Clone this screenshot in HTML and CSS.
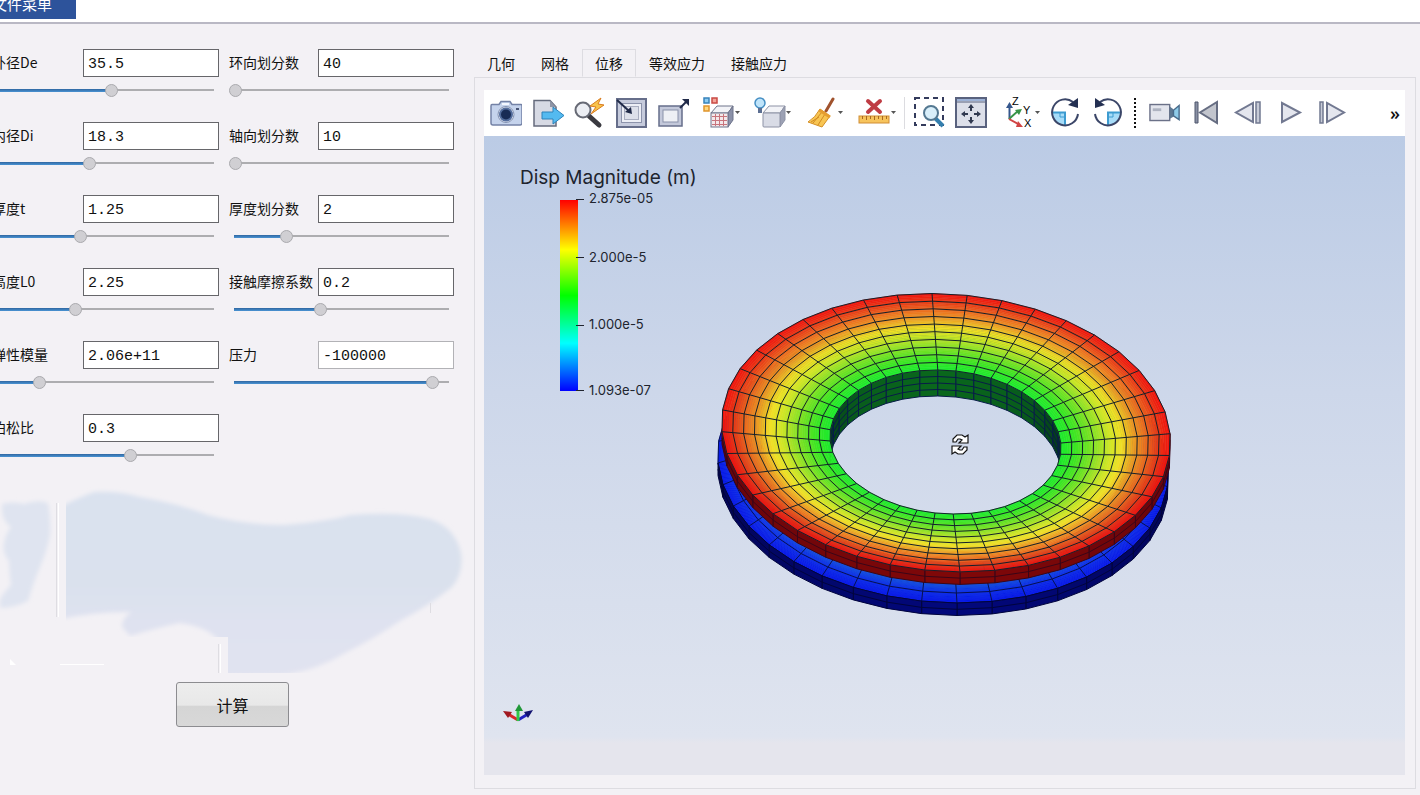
FILE: index.html
```
<!DOCTYPE html>
<html lang="zh">
<head>
    <meta charset="UTF-8">
    <meta name="viewport" content="width=device-width, initial-scale=1.0">
    <title>碟簧计算</title>
    <link rel="stylesheet" href="styles.css">
</head>
<body>
    <header class="menubar">
        <button class="menu-btn">文件菜单</button>
    </header>

    <main class="main">
        <section class="params">
            <form class="fields">
                <div class="field">
                    <label for="de">外径De</label>
                    <input type="text" id="de" value="35.5">
                    <input type="range" aria-label="外径De" max="1000" value="528" style="--v: 0.528">
                </div>
                <div class="field">
                    <label for="nc">环向划分数</label>
                    <input type="text" id="nc" value="40">
                    <input type="range" aria-label="环向划分数" max="1000" value="0" style="--v: 0">
                </div>
                <div class="field">
                    <label for="di">内径Di</label>
                    <input type="text" id="di" value="18.3">
                    <input type="range" aria-label="内径Di" max="1000" value="423" style="--v: 0.423">
                </div>
                <div class="field">
                    <label for="na">轴向划分数</label>
                    <input type="text" id="na" value="10">
                    <input type="range" aria-label="轴向划分数" max="1000" value="0" style="--v: 0">
                </div>
                <div class="field">
                    <label for="t">厚度t</label>
                    <input type="text" id="t" value="1.25">
                    <input type="range" aria-label="厚度t" max="1000" value="381" style="--v: 0.381">
                </div>
                <div class="field">
                    <label for="nt">厚度划分数</label>
                    <input type="text" id="nt" value="2">
                    <input type="range" aria-label="厚度划分数" max="1000" value="242" style="--v: 0.242">
                </div>
                <div class="field">
                    <label for="l0">高度L0</label>
                    <input type="text" id="l0" value="2.25">
                    <input type="range" aria-label="高度L0" max="1000" value="360" style="--v: 0.36">
                </div>
                <div class="field">
                    <label for="mu">接触摩擦系数</label>
                    <input type="text" id="mu" value="0.2">
                    <input type="range" aria-label="接触摩擦系数" max="1000" value="401" style="--v: 0.401">
                </div>
                <div class="field">
                    <label for="e">弹性模量</label>
                    <input type="text" id="e" value="2.06e+11">
                    <input type="range" aria-label="弹性模量" max="1000" value="192" style="--v: 0.192">
                </div>
                <div class="field">
                    <label for="p">压力</label>
                    <input type="text" id="p" class="pale" value="-100000">
                    <input type="range" aria-label="压力" max="1000" value="928" style="--v: 0.928">
                </div>
                <div class="field">
                    <label for="nu">泊松比</label>
                    <input type="text" id="nu" value="0.3">
                    <input type="range" aria-label="泊松比" max="1000" value="617" style="--v: 0.617">
                </div>
            </form>

            <svg class="smudge" viewBox="0 0 474 188" aria-hidden="true">
                <defs>
                    <filter id="soft"><feGaussianBlur stdDeviation="2"/></filter>
                    <linearGradient id="wash" x1="0" y1="0" x2="0" y2="1">
                        <stop offset="0" stop-color="#dae2ef"/>
                        <stop offset="0.5" stop-color="#dae1ed"/>
                        <stop offset="0.7" stop-color="#dfe2f0"/>
                        <stop offset="1" stop-color="#e1e3f0"/>
                    </linearGradient>
                    <clipPath id="cut"><path d="M0 0H57V188H0ZM66 0H474V186H228V150H66Z"/></clipPath>
                </defs>
                <g clip-path="url(#cut)">
                    <g filter="url(#soft)">
                        <path fill="#dfe4f0" d="M2 17Q12 14 24 17Q38 12 48 16Q51 32 50 48Q47 64 40 80Q34 94 28 114Q14 121 0 121V112Q4 105 11 98Q9 86 9 74Q2 66 4 56Q6 46 11 40Q1 34 2 17Z"/>
                        <path fill="url(#wash)" d="M60 20Q80 10 94 5Q120 4 140 10Q180 17 208 28Q245 38 284 38Q330 34 350 28Q400 24 430 32Q455 40 461 66Q464 86 452 100Q430 118 400 134Q370 154 345 166Q320 182 285 188L220 190V156Q210 140 180 136Q160 140 130 149L122 140Q122 130 132 125Q100 124 60 132Z"/>
                    </g>
                </g>
                <path stroke="#dedde2" fill="none" d="M56.500 16V130M218.500 157V186M430.500 116V126"/>
                <path stroke="#ffffff" fill="none" d="M58.500 16V130M220.500 157V186M60 177.500H104"/>
                <path fill="#ffffff" d="M10 172L16 178H10Z"/>
            </svg>

            <button class="calc-btn">计算</button>
        </section>

        <section class="results">
            <nav class="tabs">
                <button class="tab">几何</button>
                <button class="tab">网格</button>
                <button class="tab active">位移</button>
                <button class="tab">等效应力</button>
                <button class="tab">接触应力</button>
            </nav>

            <div class="panel">
                <div class="toolbar">
                    <div class="group">
                        <button class="tool" aria-label="截图"><svg viewBox="0 0 32 32" width="32" height="32">
                            <path d="M2 7.500H9L11 4.500H20L22 7.500H31Q32 7.500 32 9V26Q32 28 30 28H3Q1 28 1 26V9Q1 7.500 2 7.500Z" fill="#c5d3ec" stroke="#7482a6" stroke-width="1.500"/>
                            <circle cx="16" cy="17.500" r="8" fill="#e8edf7" stroke="#8391b0"/>
                            <circle cx="16" cy="17.500" r="6" fill="#182b55" stroke="#536c9c" stroke-width="2"/>
                            <path d="M12 7H19" stroke="#f4f7ff" stroke-width="2"/><rect x="26" y="11" width="3" height="2" fill="#485576"/>
                        </svg></button>
                        <button class="tool" aria-label="导出"><svg viewBox="0 0 32 32" width="32" height="32">
                            <path d="M2 3.500H18L24 10V29H2Z" fill="#d7dae4" stroke="#656b7c" stroke-width="1.500"/>
                            <path d="M18 3.500V10H24Z" fill="#8f95a6"/>
                            <path d="M10 15H21V10L32 18.500L21 27V22H10Z" fill="#54baf0" stroke="#2c82ba"/>
                        </svg></button>
                        <button class="tool" aria-label="快速查询"><svg viewBox="0 0 32 32" width="32" height="32">
                            <path d="M15 19L25 28" stroke="#3a3a40" stroke-width="5" stroke-linecap="round"/>
                            <circle cx="9" cy="13" r="7.500" fill="#eceef3" stroke="#676a75" stroke-width="2"/>
                            <path d="M27 1L16 9L22 10L17 17L30 8L24 7Z" fill="#f8c34a" stroke="#d97b1e"/>
                        </svg></button>
                        <button class="tool" aria-label="缩小"><svg viewBox="0 0 32 32" width="32" height="32">
                            <rect x="1" y="2" width="29" height="28" fill="#c6cbdc" stroke="#666e8a" stroke-width="2"/>
                            <rect x="5.500" y="6.500" width="20" height="19" fill="#eceef5" stroke="#8c93ab"/>
                            <rect x="8.500" y="9.500" width="14" height="13" fill="#dde0ea" stroke="#a9aec0"/>
                            <path d="M1 3L13 14" stroke="#202a48" stroke-width="2"/><path d="M16 17L9 15L15 10Z" fill="#202a48"/>
                        </svg></button>
                        <button class="tool" aria-label="放大"><svg viewBox="0 0 32 32" width="32" height="32">
                            <rect x="1" y="9" width="23" height="20" fill="#c3c8da" stroke="#666e8a" stroke-width="1.500"/>
                            <rect x="5" y="13" width="15" height="12" fill="#eef0f5" stroke="#8a91a9"/>
                            <path d="M22 11L29 4" stroke="#202a48" stroke-width="2"/><path d="M24 2H31V9Z" fill="#202a48"/>
                        </svg></button>
                    </div>
                    <div class="group">
                        <button class="tool" aria-label="网格显示"><svg viewBox="0 0 42 32" width="42" height="32">
                            <rect x="6" y="1" width="5" height="5" fill="#8acbf2" stroke="#3783bb" stroke-width="1.500"/><rect x="14" y="1" width="5" height="5" fill="#f3a59a" stroke="#c94a44" stroke-width="1.500"/><rect x="6" y="9" width="5" height="5" fill="#ffd87f" stroke="#df952d" stroke-width="1.500"/>
                            <path d="M13 16L19 9H35L30 16Z" fill="#f2f3f7" stroke="#6e748b"/>
                            <path d="M30 16L35 9V23L30 30Z" fill="#8b91a8" stroke="#6e748b"/>
                            <rect x="13" y="16" width="17" height="14" fill="#f4e8ea" stroke="#6e748b"/>
                            <path d="M17.500 17V29M21.500 17V29M25.500 17V29M14 19.500H29M14 23.500H29M14 27.500H29" stroke="#c8747c"/>
                            <path d="M37 14H42L39.500 17Z" fill="#555"/>
                        </svg></button>
                        <button class="tool" aria-label="光照"><svg viewBox="0 0 42 32" width="42" height="32">
                            <circle cx="10" cy="6" r="5" fill="#bfe4fa" stroke="#468fc4" stroke-width="1.500"/>
                            <path d="M8 11H12V16H8Z" fill="#5c6f92"/>
                            <path d="M13 16L19 9H35L30 16Z" fill="#f2f3f7" stroke="#8d92a5"/>
                            <path d="M30 16L35 9V23L30 30Z" fill="#9ca1b4" stroke="#8d92a5"/>
                            <rect x="13" y="16" width="17" height="14" rx="1" fill="#d9dce6" stroke="#8d92a5"/>
                            <path d="M36 14H41L38.500 17Z" fill="#555"/>
                        </svg></button>
                        <button class="tool" aria-label="清除"><svg viewBox="0 0 42 32" width="42" height="32">
                            <path d="M31 2L24 14" stroke="#a0522d" stroke-width="3" stroke-linecap="round"/>
                            <path d="M18 12L28 19L20 30L6 25Q13 21 18 12Z" fill="#f8c552" stroke="#d48f25"/>
                            <path d="M20 15L11 26M23 17L16 28M17 20L9 25" stroke="#d18b22"/>
                            <path d="M17 13L28 20" stroke="#e59d2f" stroke-width="3"/>
                            <path d="M36 14H41L38.500 17Z" fill="#555"/>
                        </svg></button>
                        <button class="tool" aria-label="清除测量"><svg viewBox="0 0 42 32" width="42" height="32">
                            <path d="M14 4L26 15M26 4L14 15" stroke="#bf3c44" stroke-width="4" stroke-linecap="round"/>
                            <rect x="5" y="19" width="30" height="7" fill="#f7c45c" stroke="#d08d35"/>
                            <path d="M8.500 19V22M12.500 19V23M16.500 19V22M20.500 19V23M24.500 19V22M28.500 19V23M32.500 19V22" stroke="#a86a20"/>
                            <path d="M37 14H42L39.500 17Z" fill="#555"/>
                        </svg></button>
                    </div>
                    <span class="sep"></span>
                    <div class="group">
                        <button class="tool" aria-label="框选放大"><svg viewBox="0 0 32 32" width="32" height="32">
                            <rect x="2" y="1" width="28" height="27" fill="none" stroke="#343b5c" stroke-width="2" stroke-dasharray="5 4"/>
                            <path d="M22 21L30 29" stroke="#347fae" stroke-width="4"/>
                            <circle cx="18" cy="16" r="7" fill="#d9effa" stroke="#547891" stroke-width="2"/>
                        </svg></button>
                        <button class="tool" aria-label="适应窗口"><svg viewBox="0 0 32 32" width="32" height="32">
                            <rect x="1" y="1" width="30" height="29" fill="#dcdfe9" stroke="#59627e" stroke-width="2"/>
                            <path d="M2 3H30" stroke="#9db2d6" stroke-width="2"/><path d="M2 5H30" stroke="#59627e"/>
                            <path d="M16 10V14M16 20V24M9 17H13M19 17H23" stroke="#30394f" stroke-width="2"/>
                            <path d="M16 7L19 11H13ZM16 27L19 23H13ZM6 17L10 14V20ZM26 17L22 14V20Z" fill="#30394f"/>
                        </svg></button>
                    </div>
                    <div class="group view-group">
                        <button class="tool" aria-label="视图方向"><svg viewBox="0 0 36 32" width="36" height="32">
                            <path d="M5.500 22V9" stroke="#35578d" stroke-width="2"/><path d="M5.500 5L9 11H2Z" fill="#35578d"/>
                            <path d="M5 22L14 14" stroke="#379447" stroke-width="2"/><path d="M18 12L15 18L11 13Z" fill="#379447"/>
                            <path d="M5 22L14 27" stroke="#d14444" stroke-width="2"/><path d="M19 30L12 30L14 24Z" fill="#d14444"/>
                            <text x="8" y="8" class="axis-text">Z</text><text x="19" y="17" class="axis-text">Y</text><text x="20" y="30" class="axis-text">X</text>
                            <path d="M31 14H36L33.500 17Z" fill="#555"/>
                        </svg></button>
                        <button class="tool" aria-label="顺时针旋转"><svg viewBox="0 0 32 32" width="32" height="32">
                            <path d="M15 15V28Q3 27 2 15Z" fill="#a7dcf8"/><path d="M2 15.500H15V28" fill="none" stroke="#3d9bd0" stroke-width="2"/><path d="M10 16V20H15" fill="none" stroke="#3d9bd0"/>
                            <path d="M23 5A13 13 0 1 0 28 17" fill="none" stroke="#3b4668" stroke-width="2"/>
                            <path d="M28 1V11L18 8Z" fill="#243052"/>
                        </svg></button>
                        <button class="tool" aria-label="逆时针旋转"><svg viewBox="0 0 32 32" width="32" height="32">
                            <path d="M16 15V28Q28 27 29 15Z" fill="#a7dcf8"/><path d="M29 15.500H16V28" fill="none" stroke="#3d9bd0" stroke-width="2"/><path d="M21 16V20H16" fill="none" stroke="#3d9bd0"/>
                            <path d="M8 5A13 13 0 1 1 3 17" fill="none" stroke="#3b4668" stroke-width="2"/>
                            <path d="M3 1V11L13 8Z" fill="#243052"/>
                        </svg></button>
                    </div>
                    <span class="dots"></span>
                    <div class="group">
                        <button class="tool" aria-label="录制"><svg viewBox="0 0 34 32" width="32" height="32">
                            <rect x="1" y="7" width="21" height="17" fill="#e3e5ed" stroke="#6b7188" stroke-width="1.500"/>
                            <rect x="4" y="11" width="9" height="3" fill="#aeb3c1"/>
                            <path d="M22 9L26 12V20L22 22Z" fill="#5d7892"/><path d="M26 13L32 8V23L26 19Z" fill="#8ecbe8" stroke="#486b8b" stroke-width="1.500"/>
                        </svg></button>
                        <button class="tool" aria-label="第一帧"><svg viewBox="0 0 32 32" width="32" height="32">
                            <path d="M4 5H7V26H4Z" fill="#8990a4" stroke="#4f566c"/><path d="M26 5V26L9 15.500Z" fill="#c2c5cd" stroke="#666d82" stroke-width="2"/>
                        </svg></button>
                        <button class="tool" aria-label="上一帧"><svg viewBox="0 0 32 32" width="32" height="32">
                            <path d="M20 6V25L3 15.500Z" fill="#e4e6ee" stroke="#727991" stroke-width="2"/><path d="M23 5H27V26H23Z" fill="#c7cbd7" stroke="#727991" stroke-width="1.500"/>
                        </svg></button>
                        <button class="tool" aria-label="播放"><svg viewBox="0 0 32 32" width="32" height="32">
                            <path d="M7 6V25L25 15.500Z" fill="#e4e6ee" stroke="#727991" stroke-width="2"/>
                        </svg></button>
                        <button class="tool" aria-label="下一帧"><svg viewBox="0 0 32 32" width="32" height="32">
                            <path d="M3 5H6V26H3Z" fill="#c7cbd7" stroke="#727991" stroke-width="1.500"/><path d="M10 6V25L27 15.500Z" fill="#e4e6ee" stroke="#727991" stroke-width="2"/>
                        </svg></button>
                    </div>
                    <button class="more" aria-label="更多">»</button>
                </div>

                <div class="viewport">
                    <svg class="scene" viewBox="0 0 921 639">
                        <defs>
                            <linearGradient id="rainbow" x1="0" y1="0" x2="0" y2="1">
                                <stop offset="0" stop-color="#ff0000"/>
                                <stop offset="0.26" stop-color="#ffff00"/>
                                <stop offset="0.5" stop-color="#00ff00"/>
                                <stop offset="0.75" stop-color="#00ffff"/>
                                <stop offset="1" stop-color="#0000ff"/>
                            </linearGradient>
                        </defs>
                        <text x="36" y="48" class="legend-title">Disp Magnitude (m)</text>
                        <rect x="76" y="64" width="18" height="191" fill="url(#rainbow)"/>
                        <path d="M92 63.500H100M92 121.500H100M92 189.500H100M92 254.500H100" stroke="#20242e"/>
                        <text x="105" y="67" class="legend-text">2.875e-05</text>
                        <text x="105" y="126" class="legend-text">2.000e-5</text>
                        <text x="105" y="193" class="legend-text">1.000e-5</text>
                        <text x="105" y="259" class="legend-text">1.093e-07</text>

                        <g id="mesh"></g>

                        <!-- rotate cursor -->
                        <g fill="#fff" stroke="#111" stroke-width="1.200">
                            <path d="M469 306V303L473 299H478L481 301L484 299V307H475L478 304L476 303H474L472 306Z"/>
                            <path d="M483 311V314L479 318H474L471 316L468 318V310H477L474 313L476 314H478L480 311Z"/>
                        </g>

                        <!-- orientation axes -->
                        <g stroke-width="3">
                            <path d="M34 584L24 578" stroke="#d8262c"/><path d="M19 575L28 576L24 582Z" fill="#a01820"/>
                            <path d="M34 584L44 578" stroke="#2020c0"/><path d="M49 574L44 582L40 576Z" fill="#101070"/>
                            <path d="M34 585V574" stroke="#30c848"/><path d="M35 568L39 575H31Z" fill="#209838"/>
                        </g>
                    </svg>
                </div>
            </div>
        </section>
    </main>
    <script src="mesh.js"></script>
</body>
</html>
```
FILE: styles.css
```
* {
    box-sizing: border-box;
}
body {
    margin: 0;
    height: 100vh;
    display: flex;
    flex-direction: column;
    overflow: hidden;
    background-color: #f3f1f5;
    color: #111;
    font-family: "Noto Sans CJK SC", sans-serif;
    font-size: 14px;
}
button, input {
    font-family: inherit;
    font-size: inherit;
    color: inherit;
    margin: 0;
}
.menubar {
    height: 24px;
    background-color: white;
    border-bottom: 2px solid #b9b8c4;
    margin-left: -16px;
}
.menu-btn {
    display: flex;
    align-items: flex-end;
    width: 92px;
    height: 19px;
    padding: 0 8px 4px;
    border: none;
    background-color: #2d539b;
    color: white;
    font-size: 15px;
    line-height: 22px;
}
.main {
    flex: 1;
    display: flex;
    min-height: 0;
}

/* left side */
.params {
    width: 474px;
    display: flex;
    flex-direction: column;
}
.fields {
    display: grid;
    grid-template-columns: 227px 225px;
    column-gap: 10px;
    margin-left: -8px;
    padding-top: 25px;
}
.field {
    display: grid;
    grid-template-columns: 1fr 136px;
    grid-template-rows: 28px 13px;
    row-gap: 7px;
    height: 73px;
}
.field label {
    line-height: 27px;
    white-space: nowrap;
}
.field input[type="text"] {
    width: 100%;
    border: 1px solid #66666a;
    background-color: white;
    padding: 2px 4px 0;
    font-family: "Liberation Mono", monospace;
    font-size: 15px;
}
.field input.pale {
    border-color: #b2b2b6;
}
.field input[type="range"] {
    grid-column: 1 / 3;
    appearance: none;
    width: 100%;
    height: 13px;
    background:
        linear-gradient(#2f66a0, #4a94d4) 5px 5px / calc(var(--v) * (100% - 13px)) 3px no-repeat,
        linear-gradient(#adadb0, #adadb0) 5px 5px / calc(100% - 10px) 2px no-repeat;
}
.field input[type="range"]::-webkit-slider-thumb {
    appearance: none;
    width: 13px;
    height: 13px;
    border: 1px solid #aaaaae;
    border-radius: 50%;
    background-color: #d0cfd3;
}
.smudge {
    width: 100%;
    flex-shrink: 0;
}
.calc-btn {
    width: 113px;
    height: 45px;
    margin: 7px 0 0 176px;
    border: 1px solid #8c8c90;
    border-radius: 3px;
    background: linear-gradient(#ededed, #e8e8e8 52%, #d5d5d5 53%, #d8d8d8);
    font-size: 16px;
}

/* right side */
.results {
    flex: 1;
    display: flex;
    flex-direction: column;
    min-width: 0;
    padding: 25px 4px 6px 0;
}
.tabs {
    display: flex;
    height: 28px;
}
.tab {
    padding: 0 12px;
    border: 1px solid transparent;
    background: none;
    white-space: nowrap;
}
.tab.active {
    border-color: #dddce1;
    border-bottom-color: transparent;
}
.panel {
    flex: 1;
    display: flex;
    flex-direction: column;
    min-height: 0;
    border: 1px solid #dddce1;
    padding: 12px 10px 13px 9px;
}
.toolbar {
    display: flex;
    align-items: center;
    height: 46px;
    padding: 0 5px 0 6px;
    background-color: white;
}
.group {
    display: flex;
    gap: 10px;
    margin-right: 8px;
}
.view-group {
    margin-left: 9px;
    margin-right: 10px;
}
.tool {
    padding: 0;
    border: none;
    background: none;
    height: 32px;
}
.tool svg {
    display: block;
}
.axis-text {
    font-family: "Liberation Sans", sans-serif;
    font-size: 11px;
}
.sep {
    width: 1px;
    height: 32px;
    background-color: #dcdce0;
    margin-right: 8px;
}
.dots {
    height: 30px;
    border-left: 2px dotted #111;
    margin-right: 13px;
}
.more {
    margin-left: auto;
    padding: 0;
    border: none;
    background: none;
    font-family: "Open Sans", sans-serif;
    font-size: 18px;
    font-weight: 600;
    line-height: 20px;
}
.viewport {
    flex: 1;
    min-height: 0;
    background: linear-gradient(#bbcbe5, #cdd7ea 40%, #dfe4ef 94%, #e5e5ed 95%);
}
.scene {
    display: block;
    width: 100%;
    height: 100%;
}
.legend-title {
    font-family: Inter, sans-serif;
    font-size: 19px;
    fill: #20242e;
}
.legend-text {
    font-family: Inter, sans-serif;
    font-size: 13px;
    fill: #20242e;
}
```
FILE: mesh.js
```
const SEGMENTS = 40;
const RINGS = 10;
const mesh = document.getElementById('mesh');

// point k on a projected circle, k = 0 is the far side
function point(circle, k) {
    const a = k / SEGMENTS * Math.PI * 2;
    const s = Math.sin(a), c = Math.cos(a);
    return [
        circle.x + circle.r[0] * s + circle.t[0] * c,
        circle.y + circle.r[1] * s + circle.t[1] * c
    ];
}

// f = 0 outer edge, f = 1 inner edge
function upper(f, drop = 0) {
    return {
        x: 462 - 0.5 * f, y: 296.7 + 9.3 * f + drop,
        r: [224 - 108.7 * f, 1], t: [-14 + 6.3 * f, -139.2 + 67.2 * f]
    };
}

function lower(f, drop = 0) {
    return {
        x: 459, y: 328 - 33 * f + drop,
        r: [225 - 108.7 * f, 1], t: [-14 + 6.3 * f, -139 + 67.2 * f]
    };
}

function draw(d, fill, stroke, width = 1) {
    const path = document.createElementNS('http://www.w3.org/2000/svg', 'path');
    path.setAttribute('d', d);
    path.setAttribute('fill', fill);
    path.setAttribute('fill-rule', 'evenodd');
    path.setAttribute('stroke', stroke);
    path.setAttribute('stroke-width', width);
    path.setAttribute('stroke-linejoin', 'round');
    mesh.appendChild(path);
}

function line(circle, from = 0, to = SEGMENTS) {
    const pts = [];
    for (let k = from; k <= to; k++) {
        pts.push(point(circle, k).map(n => n.toFixed(1)).join(' '));
    }
    return 'M' + pts.join('L');
}

function mix(stops, f) {
    const pos = f * (stops.length - 1);
    const i = Math.min(Math.floor(pos), stops.length - 2);
    const rgb = stops[i].map((c, n) => Math.round(c + (stops[i + 1][n] - c) * (pos - i)));
    return `rgb(${rgb.join(',')})`;
}

function face(surface, depth, stops, stroke, rings) {
    const steps = 50;
    for (let i = 0; i < steps; i++) {
        const color = mix(stops, i / (steps - 1));
        draw(line(surface(i / steps * depth)) + 'Z' + line(surface((i + 1) / steps * depth)) + 'Z', color, color, 0.5);
    }
    for (let i = 0; i <= rings; i++) {
        draw(line(surface(i / rings * depth)) + 'Z', 'none', stroke);
    }
    for (let k = 0; k < SEGMENTS; k++) {
        draw('M' + point(surface(0), k) + 'L' + point(surface(depth), k), 'none', stroke);
    }
}

function wall(surface, f, height, rows, from, to, stops, stroke) {
    for (let k = from; k < to; k++) {
        const a = point(surface(f), k), b = point(surface(f), k + 1);
        const c = point(surface(f, height), k + 1), d = point(surface(f, height), k);
        draw(`M${a}L${b}L${c}L${d}Z`, mix(stops, Math.abs((k + 0.5 - from) / (to - from) * 2 - 1)), stroke);
    }
    for (let i = 1; i < rows; i++) {
        draw(line(surface(f, height * i / rows), from, to), 'none', stroke);
    }
}

// lower spring, blue
face(lower, 0.4, [[2, 18, 230], [8, 40, 232], [16, 84, 216], [18, 96, 210], [18, 96, 210]], '#06104e', 4);
wall(lower, 0, 12.5, 2, 10, 30, [[2, 8, 125], [2, 4, 80]], '#01043c');

// inside of the hole
wall(upper, 1, 26, 4, -10, 10, [[10, 104, 28], [8, 92, 28], [4, 50, 26]], '#081c48');

// upper spring
wall(upper, 0, 12.5, 2, 10, 30, [[128, 8, 8], [100, 4, 12]], '#3a0618');
face(upper, 1, [
    [240, 20, 12], [232, 62, 22], [236, 112, 30], [236, 160, 34], [240, 224, 36],
    [206, 230, 36], [150, 226, 36], [100, 226, 34], [54, 230, 34], [30, 234, 44]
], '#14202a', RINGS);
```
